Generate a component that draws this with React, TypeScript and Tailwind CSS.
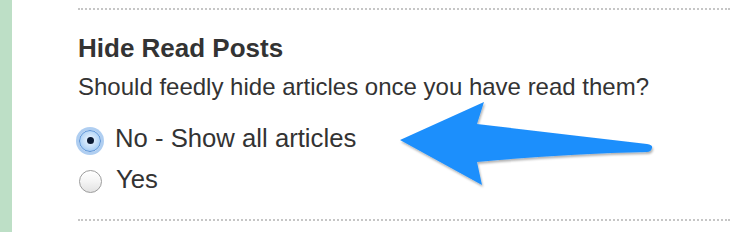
import React from "react";

function Radio({ checked }: { checked?: boolean }) {
  if (checked) {
    return (
      <span className="mt-1 ml-px flex h-[22px] w-[22px] shrink-0 items-center justify-center rounded-full border border-[#5b93d6] bg-[radial-gradient(circle_at_50%_45%,#f2f8ff_0%,#bcdaf8_55%,#86b9ee_100%)] shadow-[0_0_0_3px_rgba(110,165,230,0.55)]">
        <span className="h-[7px] w-[7px] rounded-full bg-[#0b1a33]" />
      </span>
    );
  }
  return (
    <span className="mt-1 ml-px h-[23px] w-[23px] shrink-0 rounded-full border border-[#9c9c9c] bg-[linear-gradient(180deg,#ffffff_0%,#f4f4f4_50%,#e2e2e2_100%)] shadow-[inset_0_1px_1px_rgba(255,255,255,0.9)]" />
  );
}

function Arrow() {
  return (
    <svg
      className="pointer-events-none absolute inset-0"
      width="730"
      height="232"
      viewBox="0 0 730 232"
    >
      <defs>
        <filter id="sh" x="-10%" y="-20%" width="120%" height="140%">
          <feDropShadow dx="1" dy="2" stdDeviation="1.2" floodColor="#000" floodOpacity="0.3" />
        </filter>
      </defs>
      <path
        d="M400 140 L484 102 L477 124 Q562 134 647 144 Q653 145 652 148 Q651 152 647 152 Q562 154 477 162 L482 185 Z"
        fill="#1e8ffc"
        filter="url(#sh)"
      />
    </svg>
  );
}

export default function App() {
  return (
    <div className="relative flex h-[232px] w-[730px] overflow-hidden bg-white font-['Liberation_Sans',Arial,sans-serif] text-[#333]">
      <div className="w-3 shrink-0 bg-[#bddfc6]" />
      <div className="flex-1 pl-[66px]">
        <div className="mt-2 border-t-2 border-dotted border-[#c6c6c6]" />
        <h2 className="mt-[23px] text-[26px] leading-[30px] font-bold">Hide Read Posts</h2>
        <p className="mt-[10px] text-[24px] leading-[28px]">
          Should feedly hide articles once you have read them?
        </p>
        <div className="mt-[17px] flex flex-col">
          <label className="flex h-[41px] items-center gap-[14px] text-[25.7px]">
            <Radio checked />
            No - Show all articles
          </label>
          <label className="flex h-[41px] items-center gap-[14px] text-[25.7px]">
            <Radio />
            Yes
          </label>
        </div>
        <div className="mt-[19px] border-t-2 border-dotted border-[#c6c6c6]" />
      </div>
      <Arrow />
    </div>
  );
}
